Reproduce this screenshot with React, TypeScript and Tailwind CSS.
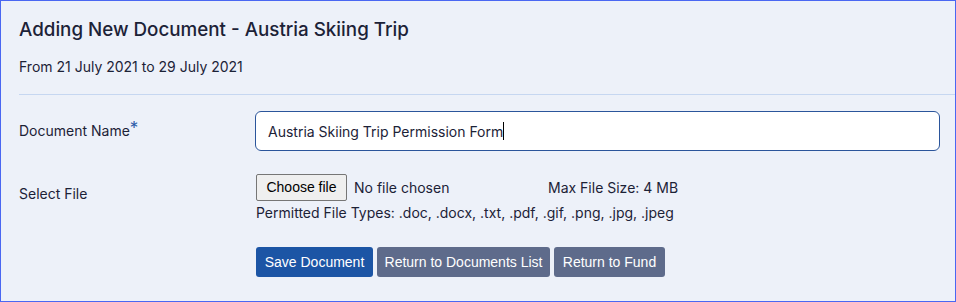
export default function App() {
  return (
    <div className="w-[956px] h-[302px] bg-[#edf1f9] border border-[#4a67f2] font-['Inter',sans-serif] text-[#1c2237] overflow-hidden">
      <div className="px-[18px] pt-[16px]">
        <h1 className="text-[18.8px] leading-[26px] font-medium">Adding New Document - Austria Skiing Trip</h1>
        <p className="mt-[14px] text-[14px] leading-[20px]">From 21 July 2021 to 29 July 2021</p>
      </div>
      <div className="ml-[18px] mt-[17px] border-t border-[#c6d7f1]" />
      <div className="px-[18px] pt-[16px]">
        <div className="flex items-center">
          <label className="w-[236px] text-[14px] -mt-[2px]">
            Document Name<span className="text-[#2a5aa8] text-[17px] align-top leading-none">*</span>
          </label>
          <div className="flex-1 mr-[-3px] h-[40px] bg-white border border-[#2b559b] rounded-[6px] flex items-center px-[12px] text-[14px]">
            Austria Skiing Trip Permission Form<span className="inline-block w-px h-[18px] bg-black" />
          </div>
        </div>
        <div className="flex mt-[23px]">
          <label className="w-[237px] text-[14px] pt-[9px]">Select File</label>
          <div className="flex flex-col">
            <div className="flex items-center h-[27px]">
              <span className="h-[27px] w-[91px] justify-center flex items-center bg-[#efefef] border border-[#767676] rounded-[2px] font-['Liberation_Sans',Arial,sans-serif] text-[14px] text-black">Choose file</span>
              <span className="ml-[7px] w-[194px] text-[14px]">No file chosen</span>
              <span className="text-[14px]">Max File Size: 4 MB</span>
            </div>
            <p className="mt-[2px] text-[14px] leading-[20px]">Permitted File Types: .doc, .docx, .txt, .pdf, .gif, .png, .jpg, .jpeg</p>
            <div className="flex gap-[4px] mt-[24px] font-['Liberation_Sans',Arial,sans-serif] text-[14px] text-white">
              <button className="h-[30px] w-[117px] bg-[#1c55a5] rounded-[3px]">Save Document</button>
              <button className="h-[30px] w-[173px] bg-[#5e6b8b] rounded-[3px]">Return to Documents List</button>
              <button className="h-[30px] w-[111px] bg-[#5e6b8b] rounded-[3px]">Return to Fund</button>
            </div>
          </div>
        </div>
      </div>
    </div>
  );
}
